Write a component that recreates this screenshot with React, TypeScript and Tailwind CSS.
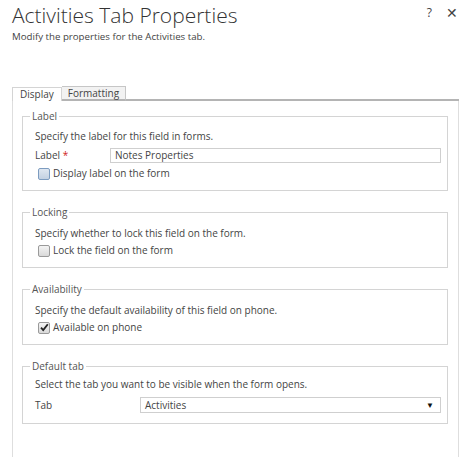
import type { ReactNode } from 'react';

const font = { fontFamily: '"Open Sans", "Noto Sans", sans-serif' };

function Group({ title, top = 'mt-[5px]', children }: { title: string; top?: string; children: ReactNode }) {
  return (
    <fieldset className="border border-[#d4d4d4] px-[7px] pb-[8px]">
      <legend className="px-[2px] text-[10px] leading-[16px] text-[#555]">{title}</legend>
      <div className={'flex flex-col pl-[5px] ' + top}>{children}</div>
    </fieldset>
  );
}

function Box({ checked, focused }: { checked?: boolean; focused?: boolean }) {
  return (
    <span
      className={
        'relative mr-[3px] inline-block h-[12px] w-[12px] rounded-[2px] border ' +
        (focused
          ? 'border-[#7d9cc0] bg-gradient-to-b from-[#dfe7f1] to-[#c3d1e2]'
          : 'border-[#9a9a9a] bg-gradient-to-b from-[#f4f4f4] to-[#d9d9d9]')
      }
    >
      {checked && (
        <svg viewBox="0 0 12 12" className="absolute left-[0px] top-[-1px] h-[11px] w-[11px]">
          <path d="M2.2 6.2 L4.6 8.8 L9.6 2.4" fill="none" stroke="#222" strokeWidth="2" />
        </svg>
      )}
    </span>
  );
}

function CheckRow({ label, checked, focused }: { label: string; checked?: boolean; focused?: boolean }) {
  return (
    <div className="flex h-[17px] items-center pl-[3px] text-[10px] text-[#444]">
      <Box checked={checked} focused={focused} />
      <span>{label}</span>
    </div>
  );
}

export default function App() {
  return (
    <div className="h-[457px] w-[474px] overflow-hidden bg-white text-[#444]" style={font}>
      <header className="flex items-start justify-between pl-[12px] pr-[16px]">
        <div>
          <h1 className="text-[21px] font-light leading-[30px] text-[#333]">Activities Tab Properties</h1>
          <p className="text-[9.7px] leading-[14px] text-[#444]">Modify the properties for the Activities tab.</p>
        </div>
        <div className="mt-[2px] flex items-center gap-[14px] text-[12px] text-[#444]">
          <span>?</span>
          <span className="text-[14px]">✕</span>
        </div>
      </header>

      <div className="ml-[12px] mt-[42px] w-[447px]">
        <div className="flex h-[15px] items-end text-[10px] leading-[13px] text-[#444]">
          <div className="flex h-[14px] items-center border-l border-r border-t border-[#d4d4d4] bg-white px-[7px]">Display</div>
          <div className="flex h-[15px] items-center border-b-2 border-r border-t border-[#c6c6c6] border-b-[#b4b4b4] bg-[#f2f2f2] px-[6px]">
            Formatting
          </div>
          <div className="h-[15px] flex-1 border-b-2 border-[#b4b4b4]" />
        </div>

        <div className="flex h-[360px] flex-col gap-[13px] border-l border-r border-[#dedede] pl-[9px] pr-[10px] pt-[7px]">
          <Group title="Label" top="mt-[4px]">
            <div className="h-[17px] text-[10px] leading-[17px]">Specify the label for this field in forms.</div>
            <div className="flex h-[20px] items-center text-[10px]">
              <span className="w-[75px]">
                Label <span className="text-[#d01c1c]">*</span>
              </span>
              <div className="mr-[-1px] flex h-[15px] flex-1 items-center border border-[#cfcfcf] pl-[4px]">Notes Properties</div>
            </div>
            <CheckRow label="Display label on the form" focused />
          </Group>

          <Group title="Locking">
            <div className="h-[17px] text-[10px] leading-[17px]">Specify whether to lock this field on the form.</div>
            <CheckRow label="Lock the field on the form" />
          </Group>

          <Group title="Availability">
            <div className="h-[17px] text-[10px] leading-[17px]">Specify the default availability of this field on phone.</div>
            <CheckRow label="Available on phone" checked />
          </Group>

          <Group title="Default tab" top="mt-[2px]">
            <div className="h-[17px] text-[10px] leading-[17px]">Select the tab you want to be visible when the form opens.</div>
            <div className="flex h-[22px] items-center pt-[2px] text-[10px]">
              <span className="w-[105px]">Tab</span>
              <div className="mr-[-1px] flex h-[16px] flex-1 items-center justify-between border border-[#cfcfcf] pl-[4px] pr-[6px]">
                <span>Activities</span>
                <span className="text-[8px] text-[#111]">▼</span>
              </div>
            </div>
          </Group>
        </div>
      </div>
    </div>
  );
}
